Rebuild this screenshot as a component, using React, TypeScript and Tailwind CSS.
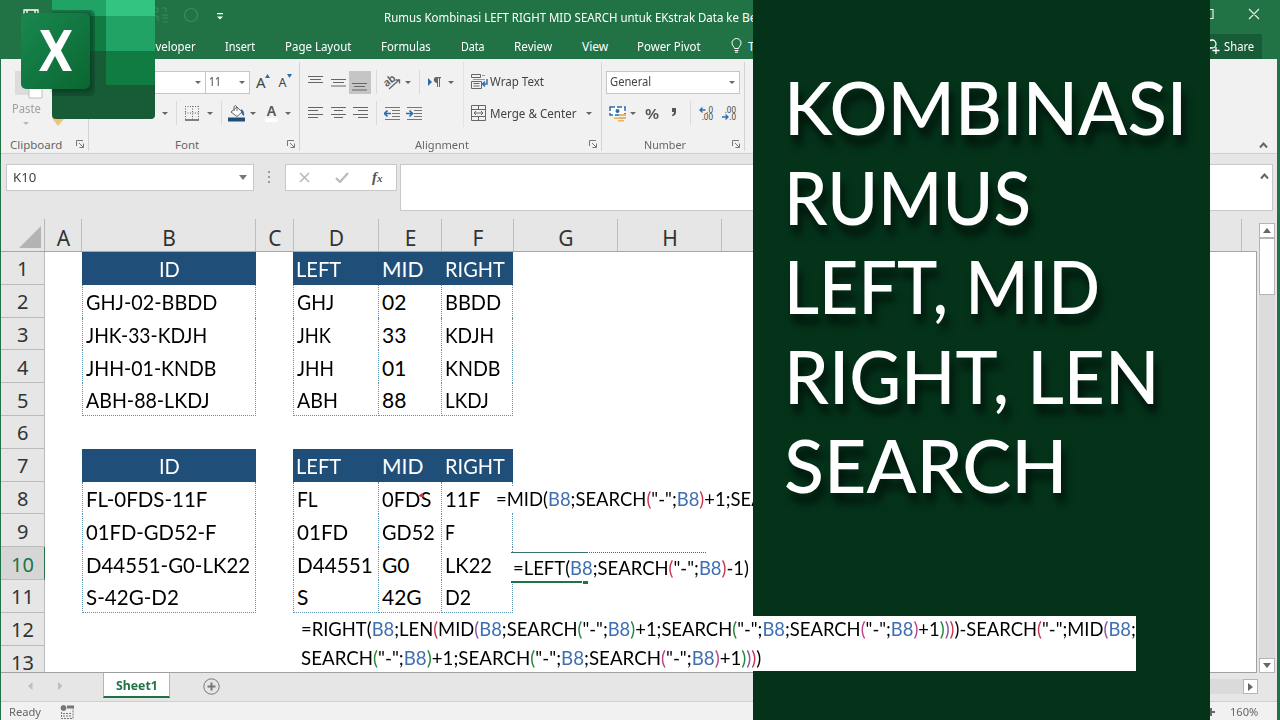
import { useLayoutEffect, useRef } from "react"
import type { ReactNode } from "react"

// Squeezes or stretches one line of text to a fixed width
function Fit({ w, children, className = "" }: { w: number; children: ReactNode; className?: string }) {
  const ref = useRef<HTMLSpanElement>(null)

  useLayoutEffect(() => {
    const el = ref.current
    if (!el) return
    el.style.transform = "none"
    el.style.transform = `scaleX(${w / el.offsetWidth})`
  }, [w])

  return (
    <span className={`block shrink-0 whitespace-nowrap ${className}`} style={{ width: w }}>
      <span ref={ref} className="inline-block origin-left whitespace-pre">
        {children}
      </span>
    </span>
  )
}

function Caret({ className = "" }: { className?: string }) {
  return <span className={`block h-0 w-0 shrink-0 border-x-[3px] border-t-[3px] border-x-transparent border-t-[#666] ${className}`} />
}

function Sep({ className = "" }: { className?: string }) {
  return <span className={`block h-[24px] w-px shrink-0 bg-[#dadada] ${className}`} />
}

function Lines({ rows, className = "" }: { rows: number[][]; className?: string }) {
  return (
    <svg width="16" height="16" viewBox="0 0 16 16" className={`shrink-0 ${className}`} stroke="#666" strokeWidth="1">
      {rows.map(([x1, x2, y], i) => (
        <line key={i} x1={x1} x2={x2} y1={y} y2={y} />
      ))}
    </svg>
  )
}

function Indent({ right, className = "" }: { right?: boolean; className?: string }) {
  return (
    <svg width="17" height="15" viewBox="0 0 17 15" className={`shrink-0 ${className}`} fill="none">
      <path d="M1 1.500h15M8 4.500h8M8 7.500h8M8 10.500h8M1 13.500h15" stroke="#777" />
      <path d={right ? "M0 7.500h6M3.500 4.500l3 3-3 3" : "M1 7.500h6M3.500 4.500l-3 3 3 3"} stroke="#2b6cab" strokeWidth="1.700" />
    </svg>
  )
}

function Launcher() {
  return (
    <svg width="9" height="9" viewBox="0 0 9 9" fill="none" stroke="#777" className="shrink-0">
      <path d="M.5 6V.5H7M3 3l4 4M7.500 3.500v4h-4" />
    </svg>
  )
}

function Group({ label, labelWidth, className, pad, children }: { label: string; labelWidth: number; className: string; pad: string; children: ReactNode }) {
  return (
    <div className={`flex h-[89px] shrink-0 flex-col border-r border-[#d4d4d4] ${className}`}>
      {children}
      <div className={`mt-auto flex h-[13px] items-center justify-between pr-[3px] text-[11.5px] text-[#666] ${pad}`}>
        <Fit w={labelWidth}>{label}</Fit>
        <Launcher />
      </div>
    </div>
  )
}

function TitleBar() {
  return (
    <div className="flex h-[31px] items-center pt-[4px]">
      <svg width="16" height="16" viewBox="0 0 16 16" className="ml-[22px] -mt-[2px]" fill="none" stroke="#fff" strokeWidth="1.300">
        <path d="M1 1h14v14H1zM4 1v5h8V1" />
      </svg>
      <svg width="16" height="18" viewBox="0 0 16 18" className="ml-[114px] -mt-[6px]" fill="none" stroke="#3d8a5f" strokeWidth="1">
        <path d="M1 2h4v4H1zM9 2h4v4M1 10h4v5M9 9h6M9 12h6M10 16h5" />
      </svg>
      <svg width="16" height="16" viewBox="0 0 16 16" className="ml-[14px] -mt-[6px]" fill="none" stroke="#3d8a5f" strokeWidth="1.200">
        <circle cx="8" cy="8" r="6.500" />
      </svg>
      <svg width="8" height="8" viewBox="0 0 8 8" className="ml-[17px] -mt-[2px]" fill="#fff">
        <path d="M1 0h6v1.200H1zM1 3.500h6L4 6.500z" />
      </svg>
      <div className="ml-[160px] flex text-[12px] text-white">
        <Fit w={358}>Rumus Kombinasi LEFT RIGHT MID SEARCH untuk EKstrak Data ke </Fit>
        <span>Be</span>
      </div>
      <svg width="60" height="12" viewBox="0 0 60 12" className="ml-auto mr-[17px] -mt-[7px]" fill="none" stroke="#e6f0ea" strokeWidth="1.200">
        <path d="M4 1.500h9v9H4zM49 1l10 10M59 1L49 11" />
      </svg>
    </div>
  )
}

const tabs = [
  { name: "Insert", w: 30, gap: "ml-[29px]" },
  { name: "Page Layout", w: 66, gap: "ml-[30px]" },
  { name: "Formulas", w: 50, gap: "ml-[30px]" },
  { name: "Data", w: 24, gap: "ml-[30px]" },
  { name: "Review", w: 38, gap: "ml-[29px]" },
  { name: "View", w: 26, gap: "ml-[30px]" },
  { name: "Power Pivot", w: 64, gap: "ml-[29px]" },
]

function TabBar() {
  return (
    <div className="flex h-[28px] items-center pt-[3px] text-[12px] text-white">
      <Fit w={55} className="ml-[140px]">Developer</Fit>
      {tabs.map((t) => (
        <Fit key={t.name} w={t.w} className={t.gap}>{t.name}</Fit>
      ))}
      <svg width="11" height="15" viewBox="0 0 11 15" className="ml-[30px] -mt-[2px] shrink-0" fill="none" stroke="#fff">
        <path d="M3.500 10.500C3.500 8.500 1 8 1 5a4.500 4.500 0 019 0c0 3-2.500 3.500-2.500 5.500zM3.500 12.500h4M4 14.200h3" />
      </svg>
      <span className="ml-[6px]">Tell me</span>
      <div className="ml-auto mr-[15px] flex h-[25px] w-[64px] items-center self-end bg-[#185c37] pl-[8px]">
        <svg width="15" height="16" viewBox="0 0 15 16" fill="none" stroke="#fff" strokeWidth="1.300">
          <circle cx="6" cy="5" r="4" />
          <path d="M0 14c0-3 2-5 5-5M10 8v7M6.500 11.500h7" />
        </svg>
        <Fit w={30} className="ml-[3px]">Share</Fit>
      </div>
    </div>
  )
}

function Ribbon() {
  return (
    <div className="flex h-[95px] border-b border-[#d0d0d0] bg-[#f1f1f1] pt-[3px]">
      <Group label="Clipboard" labelWidth={52} className="w-[88px]" pad="pl-[9px]">
        <div className="flex h-[37px] items-end pl-[14px]">
          <svg width="28" height="30" viewBox="0 0 28 30">
            <path d="M0 2h22v24H0z" fill="#dcdcdc" />
            <path d="M14 8h13v21H14z" fill="#fff" stroke="#c0c0c0" />
          </svg>
        </div>
        <div className="flex pl-[11px] text-[12px] leading-[20px] text-[#a0a0a0]">
          <Fit w={29}>Paste</Fit>
          <svg width="16" height="14" viewBox="0 0 16 14" className="ml-[10px] mt-[14px]">
            <path d="M1 5l7-3 5 4-6 7z" fill="#edc47d" />
            <path d="M8 2l4-2 3 3-2 3z" fill="#444" />
          </svg>
        </div>
        <Caret className="-mt-[5px] ml-[22px] opacity-40" />
      </Group>

      <Group label="Font" labelWidth={24} className="w-[211px]" pad="pl-[86px]">
        <div className="mt-[8px] flex h-[24px] items-center text-[12px] text-[#444]">
          <div className="flex h-[23px] w-[117px] items-center justify-end border border-[#c6c6c6] bg-white pr-[4px]"><Caret /></div>
          <div className="flex h-[23px] w-[44px] items-center justify-between border border-l-0 border-[#c6c6c6] bg-white pl-[3px] pr-[4px]">
            <Fit w={12}>11</Fit>
            <Caret />
          </div>
          <span className="ml-[6px] text-[15px]">A</span>
          <svg width="5" height="4" viewBox="0 0 5 4" className="-mt-[13px] -ml-px"><path d="M0 4l2.500-4L5 4z" fill="#2b6cab" /></svg>
          <span className="ml-[9px] mt-[2px] text-[12.5px]">A</span>
          <svg width="5" height="4" viewBox="0 0 5 4" className="-mt-[13px]"><path d="M0 0l2.500 4L5 0z" fill="#2b6cab" /></svg>
        </div>
        <div className="mt-[7px] flex h-[24px] items-center">
          <Caret className="ml-[73px]" />
          <Sep className="ml-[8px]" />
          <svg width="15" height="15" viewBox="0 0 15 15" className="ml-[8px]" fill="none" stroke="#666">
            <path d="M.5 0v14M7.500 0v14M13.500 0v14M0 .5h14M0 7h14" strokeDasharray="1 1.500" />
            <path d="M0 14h14" strokeWidth="1.600" />
          </svg>
          <Caret className="ml-[7px]" />
          <Sep className="ml-[8px]" />
          <svg width="18" height="17" viewBox="0 0 18 17" className="ml-[6px]" fill="none">
            <path d="M0 12.500h17v4H0z" fill="#1f4e78" />
            <path d="M3 7l6-5 5 5-5 4.500zM6 6V1.500Q8-.5 9 2v4" fill="#fff" stroke="#666" />
            <path d="M13 4q4 2 3 7-2-1-3-4z" fill="#2b6cab" />
          </svg>
          <Caret className="ml-[4px]" />
          <span className="ml-[9px] flex h-[17px] w-[13px] items-center justify-center border-b-[4px] border-white pb-[2px] text-[14px] font-semibold text-[#555]">A</span>
          <Caret className="ml-[7px]" />
        </div>
      </Group>

      <div className="flex">
        <Group label="Alignment" labelWidth={54} className="w-[302px]" pad="pl-[115px]">
          <div className="flex">
            <div className="flex w-[164px] flex-col border-r border-[#e2e2e2] pb-[2px]">
              <div className="mt-[8px] flex h-[24px] items-center text-[12px]">
                <Lines className="ml-[8px] -mt-[3px]" rows={[[0, 15, 3.5], [2, 13, 6.5], [0, 15, 9.5]]} />
                <Lines className="ml-[7px] -mt-[3px]" rows={[[0, 15, 6.5], [2, 13, 9.5], [0, 15, 13]]} />
                <span className="ml-[2px] flex h-[23px] w-[22px] items-center justify-center bg-[#c5c5c5]">
                  <Lines className="mt-[5px]" rows={[[0, 15, 6.5], [2, 13, 9.5], [0, 15, 13]]} />
                </span>
                <Sep className="ml-[5px]" />
                <svg width="17" height="16" viewBox="0 0 17 16" className="ml-[7px] overflow-visible" fill="none">
                  <text x="0" y="10" fontSize="10.500" fill="#555" fontWeight="600" transform="rotate(-38 6 8)">ab</text>
                  <path d="M5 15L15 6M11.500 6H15.500V9.500" stroke="#666" strokeWidth="1.300" />
                </svg>
                <Caret className="ml-[4px]" />
                <Sep className="ml-[8px]" />
                <svg width="13" height="11" viewBox="0 0 13 11" className="ml-[8px]" fill="#666">
                  <path d="M0 1l4 4-4 4z" fill="#2b6cab" />
                  <path d="M8 0h5v1.200h-1V10h-1V1.200h-1V10H9V6C5 6 5 0 8 0z" />
                </svg>
                <Caret className="ml-[7px]" />
              </div>
              <div className="mt-[7px] flex h-[24px] items-center">
                <Lines className="ml-[8px]" rows={[[0, 15, 2.5], [0, 10, 5.5], [0, 15, 9.5], [0, 10, 12.5]]} />
                <Lines className="ml-[7px]" rows={[[0, 15, 2.5], [3, 12, 5.5], [0, 15, 9.5], [3, 12, 12.5]]} />
                <Lines className="ml-[6px]" rows={[[0, 15, 2.5], [5, 15, 5.5], [0, 15, 9.5], [5, 15, 12.5]]} />
                <Sep className="ml-[7px]" />
                <Indent className="ml-[7px]" />
                <Indent right className="ml-[5px]" />
              </div>
            </div>
            <div className="flex flex-col text-[12px] text-[#444]">
              <div className="mt-[8px] flex h-[24px] items-center">
                <svg width="17" height="17" viewBox="0 0 17 17" className="ml-[7px] -mt-[2px]" fill="none" stroke="#666">
                  <path d="M.5 1.500h9v3h-9zM.5 8.500h10v7h-10zM2.500 10.500h6M2.500 13h6" />
                  <path d="M11 2.500h3M2 6.500h12" stroke="#999" />
                  <path d="M16 6v5h-4M14 8.500L11.500 11l2.500 2.500" stroke="#2b6cab" strokeWidth="1.400" />
                </svg>
                <Fit w={54} className="ml-[2px]">Wrap Text</Fit>
              </div>
              <div className="mt-[7px] flex h-[24px] items-center">
                <svg width="16" height="16" viewBox="0 0 16 16" className="ml-[7px]" fill="none" stroke="#666">
                  <path d="M.5.5h14v15H.5zM.5 4.500h14M.5 11.500h14M7.500 0v4.500M7.500 11.500V16M3 8h9M5 6L3 8l2 2M10 6l2 2-2 2" />
                </svg>
                <Fit w={87} className="ml-[3px] pt-px">Merge &amp; Center</Fit>
                <Caret className="ml-[9px]" />
              </div>
            </div>
          </div>
        </Group>

        <Group label="Number" labelWidth={42} className="w-[143px]" pad="pl-[42px]">
          <div className="mt-[8px] flex h-[24px] items-center text-[12px] text-[#444]">
            <div className="ml-[4px] flex h-[23px] w-[134px] items-center justify-between border border-[#c6c6c6] bg-white pl-[3px] pr-[4px]">
              <Fit w={41}>General</Fit>
              <Caret />
            </div>
          </div>
          <div className="mt-[7px] flex h-[24px] items-center text-[#555]">
            <svg width="18" height="17" viewBox="0 0 18 17" className="ml-[7px] shrink-0">
              <path d="M1 2h15v8H1z" fill="#fff" stroke="#2b6cab" strokeWidth="1.500" strokeDasharray="5 2" />
              <circle cx="8.500" cy="6" r="2" fill="#2b6cab" />
              <path d="M5 12.500h6v1.500H5zM10 9h7v2h-7zM10 12h7v2h-7zM9 15h6v1.500H9z" fill="#e9b268" />
            </svg>
            <Caret className="ml-[3px]" />
            <Fit w={14} className="ml-[9px] text-[15px] font-semibold">%</Fit>
            <svg width="6" height="9" viewBox="0 0 6 9" className="ml-[12px] -mt-[2px] shrink-0" fill="#555"><path d="M1 0h4v4Q5 8 1 8V7q2-1 2-3H1z" /></svg>
            <Sep className="ml-[13px]" />
            <div className="ml-[7px] flex w-[15px] shrink-0 flex-col items-end text-[8px] leading-[7px] text-[#444]">
              <span className="flex items-center">
                <svg width="7" height="6" viewBox="0 0 7 6" fill="none" stroke="#2b6cab" strokeWidth="1.300"><path d="M1 3h5.500M3.500.5L1 3l2.500 2.500" /></svg>
                .0
              </span>
              <span>.00</span>
            </div>
            <div className="ml-[8px] flex w-[15px] shrink-0 flex-col items-end text-[8px] leading-[7px] text-[#444]">
              <span>.00</span>
              <span className="flex items-center">
                <svg width="7" height="6" viewBox="0 0 7 6" fill="none" stroke="#2b6cab" strokeWidth="1.300"><path d="M0 3h6M3.500.5L6 3 3.500 5.500" /></svg>
                .0
              </span>
            </div>
          </div>
        </Group>
      </div>
      <svg width="9" height="7" viewBox="0 0 9 7" className="ml-auto mr-[9px] mt-[80px]" fill="none" stroke="#666" strokeWidth="2">
        <path d="M1 5.500l3.500-4 3.500 4" />
      </svg>
    </div>
  )
}

function FormulaBar() {
  return (
    <div className="flex h-[65px] items-start bg-[#e6e6e6] pt-[10px] text-[12px]">
      <div className="ml-[5px] flex h-[27px] w-[248px] items-center justify-between border border-[#c8c8c8] bg-white pl-[6px] pr-[6px] text-[#444]">
        <Fit w={23}>K10</Fit>
        <span className="block h-0 w-0 border-x-4 border-t-[5px] border-x-transparent border-t-[#777]" />
      </div>
      <svg width="3" height="13" viewBox="0 0 3 13" className="ml-[14px] mt-[7px]" fill="#999">
        <path d="M0 0h2v2H0zM0 5h2v2H0zM0 10h2v2H0z" />
      </svg>
      <div className="ml-[14px] flex h-[27px] w-[112px] items-center border border-[#c8c8c8] bg-white">
        <svg width="11" height="11" viewBox="0 0 11 11" className="ml-[13px]" fill="none" stroke="#bbb" strokeWidth="1.700"><path d="M1 1l9 9M10 1l-9 9" /></svg>
        <svg width="14" height="11" viewBox="0 0 14 11" className="ml-[25px]" fill="none" stroke="#bbb" strokeWidth="2.200"><path d="M1 6l4 4 8-9" /></svg>
        <span className="ml-[23px] font-['Liberation_Serif'] text-[15px] font-bold italic leading-none text-[#555]">f<span className="text-[11px]">x</span></span>
      </div>
      <div className="ml-[3px] flex h-[47px] w-[873px] justify-end border border-[#c8c8c8] bg-white">
        <svg width="9" height="7" viewBox="0 0 9 7" className="mr-[3px] mt-[8px]" fill="none" stroke="#666" strokeWidth="2"><path d="M1 5.500l3.500-4 3.500 4" /></svg>
      </div>
    </div>
  )
}

type Cell = [string, number]

const rows: { head?: boolean; last?: boolean; id?: Cell; left?: Cell; mid?: Cell; right?: Cell }[] = [
  { head: true, id: ["ID", 21], left: ["LEFT", 45], mid: ["MID", 41], right: ["RIGHT", 60] },
  { id: ["GHJ-02-BBDD", 131], left: ["GHJ", 37], mid: ["02", 24], right: ["BBDD", 56] },
  { id: ["JHK-33-KDJH", 121], left: ["JHK", 34], mid: ["33", 24], right: ["KDJH", 49] },
  { id: ["JHH-01-KNDB", 130], left: ["JHH", 37], mid: ["01", 24], right: ["KNDB", 56] },
  { last: true, id: ["ABH-88-LKDJ", 124], left: ["ABH", 41], mid: ["88", 24], right: ["LKDJ", 44] },
  {},
  { head: true, id: ["ID", 21], left: ["LEFT", 45], mid: ["MID", 41], right: ["RIGHT", 60] },
  { id: ["FL-0FDS-11F", 121], left: ["FL", 21], mid: ["0FDS", 49], right: ["11F", 35] },
  { id: ["01FD-GD52-F", 130], left: ["01FD", 51], mid: ["GD52", 53], right: ["F", 10] },
  { id: ["D44551-G0-LK22", 164], left: ["D44551", 76], mid: ["G0", 28], right: ["LK22", 47] },
  { last: true, id: ["S-42G-D2", 93], left: ["S", 11], mid: ["42G", 40], right: ["D2", 26] },
  {},
  {},
]

function DataCell({ cell, head, last, first }: { cell?: Cell; head?: boolean; last?: boolean; first?: boolean }) {
  if (!cell) return <div />
  const tone = head
    ? "bg-[#1f4e78] text-white"
    : `border-r border-dotted border-[#5b93ad] text-black ${first ? "border-l" : ""} ${last ? "border-b" : ""}`
  return (
    <div className={`flex items-center pt-px font-[Lato] text-[21px] leading-none ${tone} ${cell[0] === "ID" ? "justify-center" : "pl-[3px]"}`}>
      <Fit w={cell[1]}>{cell[0]}</Fit>
    </div>
  )
}

const columns = ["A", "B", "C", "D", "E", "F", "G", "H", "", "", "", "", ""]

function Sheet() {
  return (
    <div className="flex h-[454px] bg-[#e6e6e6]">
      <div className="flex w-[1256px] flex-col overflow-hidden">
        <div className="grid h-[33px] shrink-0 grid-cols-[44px_37px_174px_38px_85px_63px_72px_104px_104px_104px_104px_104px_104px_104px] border-b border-[#a6a6a6] text-[21px] leading-none text-[#333]">
          <div className="flex items-end justify-end border-r border-[#b8b8b8] pb-[3px] pr-[3px]">
            <svg width="22" height="22" viewBox="0 0 22 22"><path d="M22 0v22H0z" fill="#b3b3b3" /></svg>
          </div>
          {columns.map((c, i) => (
            <div key={i} className="flex items-center justify-center border-r border-[#bdbdbd] pl-px pt-[7px]">{c}</div>
          ))}
        </div>
        <div className="min-h-0 grow overflow-hidden border-b border-r border-[#a0a0a0] bg-white">
          {rows.map((r, i) => (
            <div key={i} className="grid h-[32.8px] grid-cols-[44px_37px_174px_37px_86px_63px_71px]">
              <div className={`flex items-center justify-center border-b border-r text-[20px] leading-none ${i === 9 ? "border-b-[#bbb] border-r-[#217346] bg-[#d6d6d6] text-[#217346]" : "border-[#bbb] bg-[#e6e6e6] text-[#333]"}`}>
                <Fit w={i > 8 ? 23 : 11} className="pt-[3px]">{i + 1}</Fit>
              </div>
              <div />
              <DataCell cell={r.id} head={r.head} last={r.last} first />
              <div />
              <DataCell cell={r.left} head={r.head} last={r.last} first />
              <DataCell cell={r.mid} head={r.head} last={r.last} />
              <DataCell cell={r.right} head={r.head} last={r.last} />
            </div>
          ))}
        </div>
      </div>
      <div className="ml-[2px] mt-[4px] flex w-[16px] flex-col bg-[#dcdcdc]">
        <div className="flex h-[15px] items-center justify-center border border-[#b5b5b5] bg-white">
          <span className="block border-x-4 border-b-[5px] border-x-transparent border-b-[#666]" />
        </div>
        <div className="h-[57px] border border-[#b5b5b5] bg-white" />
        <div className="mt-auto flex h-[15px] items-center justify-center border border-[#b5b5b5] bg-white">
          <span className="block border-x-4 border-t-[5px] border-x-transparent border-t-[#666]" />
        </div>
      </div>
    </div>
  )
}

function SheetTabs() {
  return (
    <div className="flex h-[29px] items-start border-b border-[#cfcfcf] bg-[#e6e6e6]">
      <svg width="34" height="9" viewBox="0 0 34 9" className="ml-[27px] mt-[9px]" fill="#bfbfbf"><path d="M4.500 0v8L0 4zM30 0v8l4.500-4z" /></svg>
      <div className="ml-[41px] flex h-[25px] w-[67px] items-center justify-center border-x border-b-2 border-x-[#b5b5b5] border-b-[#217346] bg-white pt-[3px] text-[12px] font-bold text-[#217346]">
        <Fit w={42}>Sheet1</Fit>
      </div>
      <svg width="17" height="17" viewBox="0 0 17 17" className="ml-[33px] mt-[5px]" fill="none" stroke="#777">
        <circle cx="8.500" cy="8.500" r="7.700" />
        <path d="M8.500 4.500v8M4.500 8.500h8" strokeWidth="2" />
      </svg>
      <div className="ml-auto mr-[19px] mt-[6px] flex h-[15px] w-[120px] justify-end bg-[#dadada]">
        <div className="flex w-[15px] items-center justify-center border border-[#b5b5b5] bg-white">
          <span className="block border-y-4 border-l-[5px] border-y-transparent border-l-[#666]" />
        </div>
      </div>
    </div>
  )
}

function StatusBar() {
  return (
    <div className="flex h-[18px] items-center bg-[#f1f1f1] pt-[2px] text-[11.5px] text-[#666]">
      <Fit w={32} className="ml-[8px]">Ready</Fit>
      <svg width="14" height="14" viewBox="0 0 14 14" className="ml-[19px]" fill="none" stroke="#777">
        <circle cx="3.500" cy="3" r="2.500" fill="#777" />
        <path d="M1.500 7v6.500h11.500V3.500M7 2.500h7M3 8.500h9M3 11h9" strokeDasharray="2 1" />
        <path d="M7 2h7" strokeWidth="3" />
      </svg>
      <svg width="8" height="8" viewBox="0 0 8 8" className="ml-auto mr-[15px]" stroke="#666" strokeWidth="2"><path d="M4 0v8M0 4h8" /></svg>
      <Fit w={28} className="mr-[19px]">160%</Fit>
    </div>
  )
}

const palette = {
  b: "text-[#3f6fb3]",
  r: "text-[#c8384f]",
  g: "text-[#23883a]",
  p: "text-[#8d51a8]",
  m: "text-[#b8458f]",
}

// "~x...~" paints the enclosed part with the palette colour x
function Formula({ src }: { src: string }) {
  return (
    <>
      {src.split("~").map((part, i) =>
        i % 2 ? (
          <span key={i} className={palette[part[0] as keyof typeof palette]}>{part.slice(1)}</span>
        ) : (
          part
        ),
      )}
    </>
  )
}

function Logo() {
  return (
    <svg width="140" height="122" viewBox="0 0 140 122" className="absolute left-[18px] top-0">
      <defs>
        <linearGradient id="plate" x1="0" y1="0" x2="1" y2="1">
          <stop offset="0" stopColor="#18884f" />
          <stop offset="1" stopColor="#0b6631" />
        </linearGradient>
        <filter id="soft"><feGaussianBlur stdDeviation="1.500" /></filter>
      </defs>
      <path d="M34 0h103v115a4 4 0 01-4 4H38a4 4 0 01-4-4z" fill="#185c37" />
      <path d="M34 0h54v16H34z" fill="#21a366" />
      <path d="M88 0h49v16H88z" fill="#33c481" />
      <path d="M34 16h54v35H34z" fill="#107c41" />
      <path d="M88 16h49v35H88z" fill="#21a366" />
      <path d="M88 51h49v34H88z" fill="#107c41" />
      <path d="M34 51h54v34H34z" fill="#185c37" />
      <path d="M34 10h38a5 5 0 015 5v76a5 5 0 01-5 5H34z" fill="#0b3d22" opacity=".4" />
      <path d="M34 12h35a5 5 0 015 5v70a5 5 0 01-5 5H34z" fill="#062e18" opacity=".45" filter="url(#soft)" />
      <rect x="3" y="13" width="69" height="76" rx="5" fill="url(#plate)" />
      <path d="M22 30h9l7 14 8-14h8L43 50.500 54 71h-9l-8-15-8 15h-8l12-20.500z" fill="#fff" />
    </svg>
  )
}

const headline: Cell[] = [
  ["KOMBINASI", 403],
  ["RUMUS", 247],
  ["LEFT, MID", 316],
  ["RIGHT, LEN", 375],
  ["SEARCH", 284],
]

export default function App() {
  return (
    <div className="relative h-[720px] w-[1280px] overflow-hidden bg-[#217346] font-['Noto_Sans',sans-serif]">
      <div className="ml-px flex w-[1276px] flex-col">
        <TitleBar />
        <TabBar />
        <Ribbon />
        <FormulaBar />
        <Sheet />
        <SheetTabs />
        <StatusBar />
      </div>

      <span className="absolute left-[418px] top-[493px] h-[5px] w-[7px] bg-[#d3333c] [clip-path:polygon(0_60%,60%_0,100%_100%)]" />

      <div className="absolute left-[496px] top-[486px] h-[26px] w-[257px] overflow-hidden bg-white font-[Lato] text-[19px] leading-[26px] text-black">
        <Fit w={268}><Formula src={'=MID(~bB8~;SEARCH~r(~"-";~bB8~~r)~+1;SEA'} /></Fit>
      </div>

      <div className="absolute left-[511px] top-[552px] h-[32px] w-[242px] bg-white pl-[2px] font-[Lato] text-[19px] leading-[32px] text-black">
        <Fit w={236}><Formula src={'=LEFT(~bB8~;SEARCH~r(~"-";~bB8~~r)~-1)'} /></Fit>
        <span className="absolute left-0 top-0 w-[195px] border-t border-dotted border-[#2f6f7a]" />
        <span className="absolute left-0 top-0 h-px w-[76px] bg-[#39716f]" />
        <span className="absolute bottom-[1px] left-0 h-[2px] w-[71px] bg-[#217346]" />
        <span className="absolute bottom-0 left-[72px] h-[3px] w-[5px] bg-[#217346]" />
      </div>

      <div className="absolute left-[753px] top-0 flex h-[720px] w-[457px] flex-col bg-[#04331a] pl-[31px] pt-[62px] font-[Lato] text-[73.500px] font-medium leading-[89.500px] text-white [text-shadow:4px_10px_9px_rgba(0,0,0,.65)]">
        {headline.map(([line, w]) => (
          <Fit key={line} w={w}>{line}</Fit>
        ))}
      </div>

      <div className="absolute left-[300px] top-[616px] h-[55px] w-[836px] overflow-hidden bg-white pl-px font-[Lato] text-[19px] leading-[29px] text-black">
        <Fit w={835} className="-mt-[2px]"><Formula src={'=RIGHT(~bB8~;LEN~r(~MID~p(~~bB8~;SEARCH~g(~"-";~bB8~~g)~+1;SEARCH~g(~"-";~bB8~;SEARCH~m(~"-";~bB8~~m)~+1~g)~~p)~~r)~)-SEARCH~r(~"-";MID~p(~~bB8~;'} /></Fit>
        <Fit w={460}><Formula src={'SEARCH~g(~"-";~bB8~~g)~+1;SEARCH~g(~"-";~bB8~;SEARCH~m(~"-";~bB8~~m)~+1~g)~~p)~~r)~)'} /></Fit>
      </div>

      <Logo />
    </div>
  )
}
